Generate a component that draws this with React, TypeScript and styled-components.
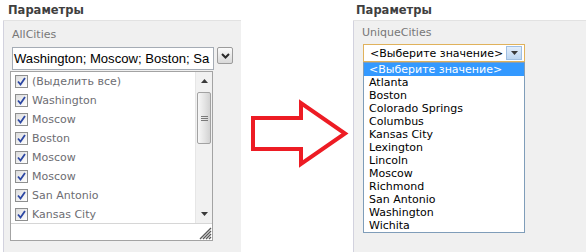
import React from 'react';
import styled, { createGlobalStyle } from 'styled-components';

const GlobalStyle = createGlobalStyle`
    html, body {
        margin: 0;
        padding: 0;
        background: #ffffff;
    }
    body {
        width: 586px;
        height: 252px;
        overflow: hidden;
        font-family: "DejaVu Sans", Verdana, sans-serif;
    }
`;

const Page = styled.div`
    display: flex;
    width: 586px;
    height: 252px;
`;

const Panel = styled.section<{ $width: number; $offset: number }>`
    width: ${p => p.$width}px;
    margin-left: ${p => p.$offset}px;
    display: flex;
    flex-direction: column;
    flex-shrink: 0;
`;

const PanelHeader = styled.div<{ $indent: number }>`
    height: 20px;
    line-height: 20px;
    padding-left: ${p => p.$indent}px;
    font-size: 11.5px;
    font-weight: bold;
    color: #3f3f3f;
    border-bottom: 1px solid #e2e2e2;
`;

const PanelBody = styled.div<{ $padTop: number; $padLeft: number }>`
    flex: 1;
    background: #f0f0f0;
    border-left: 1px solid #d2d2de;
    padding: ${p => p.$padTop}px 0 0 ${p => p.$padLeft}px;
    display: flex;
    flex-direction: column;
    align-items: flex-start;
`;

const FieldLabel = styled.div<{ $indent: number }>`
    margin-left: ${p => p.$indent}px;
    font-size: 11px;
    line-height: 14px;
    color: #777777;
`;

const InputRow = styled.div`
    display: flex;
    align-items: flex-start;
    gap: 3px;
    margin: 5px 0 0 2px;
`;

const TextBox = styled.div`
    box-sizing: border-box;
    width: 202px;
    height: 23px;
    border: 1px solid #a5acb5;
    background: #ffffff;
    padding-left: 1px;
    font-family: "Liberation Sans", Arial, sans-serif;
    font-size: 13.1px;
    line-height: 21px;
    color: #000000;
    white-space: nowrap;
    overflow: hidden;
`;

const DropButton = styled.div`
    box-sizing: border-box;
    width: 16px;
    height: 17px;
    border: 1px solid #9c9c9c;
    border-radius: 2px;
    background: linear-gradient(#fbfbfb, #d9d9d9);
    display: flex;
    align-items: center;
    justify-content: center;
`;

const CheckList = styled.div`
    box-sizing: border-box;
    width: 203px;
    height: 170px;
    margin-top: 1px;
    border: 1px solid #a3a3a3;
    background: #ffffff;
    display: flex;
    flex-direction: column;
`;

const ListViewport = styled.div`
    height: 151px;
    display: flex;
    overflow: hidden;
`;

const Items = styled.div`
    flex: 1;
    padding-left: 4px;
`;

const CheckRow = styled.div`
    height: 19px;
    display: flex;
    align-items: center;
    gap: 4px;
    font-size: 11px;
    color: #6d6d72;
    white-space: nowrap;
`;

const CheckBox = styled.span`
    box-sizing: border-box;
    width: 13px;
    height: 13px;
    border: 1px solid #8e8f8f;
    background: linear-gradient(135deg, #dcdcdc, #ffffff);
    display: flex;
    align-items: center;
    justify-content: center;
    flex-shrink: 0;
`;

const Scrollbar = styled.div`
    width: 16px;
    background: #f1f1f1;
    border-left: 1px solid #e6e6e6;
    display: flex;
    flex-direction: column;
    align-items: center;
`;

const ArrowCell = styled.div`
    height: 18px;
    width: 100%;
    display: flex;
    align-items: center;
    justify-content: center;
`;

const Thumb = styled.div`
    box-sizing: border-box;
    margin-top: 2px;
    width: 14px;
    height: 52px;
    border: 1px solid #a2a2a2;
    border-radius: 2px;
    background: linear-gradient(90deg, #f7f7f7, #e2e2e2 60%, #d2d2d2);
    display: flex;
    align-items: center;
    justify-content: center;
`;

const Spacer = styled.div`
    flex: 1;
`;

const ListFooter = styled.div`
    flex: 1;
    border-top: 1px solid #d6d6d6;
    display: flex;
    justify-content: flex-end;
    align-items: flex-end;
`;

const ArrowZone = styled.div`
    width: 112px;
    flex-shrink: 0;
`;

const SelectBox = styled.div`
    box-sizing: border-box;
    width: 162px;
    height: 18px;
    margin-top: 4px;
    border: 1px solid #e0b25c;
    background: #ffffff;
    padding-left: 6px;
    padding-right: 2px;
    display: flex;
    align-items: center;
    justify-content: space-between;
    font-size: 11px;
    color: #000000;
`;

const SelectButton = styled.div`
    box-sizing: border-box;
    width: 16px;
    height: 14px;
    border: 1px solid #9fbfe2;
    background: linear-gradient(#e3eefb, #bcd6f1);
    display: flex;
    align-items: center;
    justify-content: center;
`;

const OptionList = styled.div`
    box-sizing: border-box;
    width: 162px;
    border: 1px solid #7f9db9;
    background: #ffffff;
`;

const Option = styled.div<{ $selected?: boolean }>`
    height: 13px;
    line-height: 13px;
    padding-left: 5px;
    font-size: 11px;
    white-space: nowrap;
    color: ${p => (p.$selected ? '#ffffff' : '#000000')};
    background: ${p => (p.$selected ? '#3399ff' : 'transparent')};
`;

const checked = ['(Выделить все)', 'Washington', 'Moscow', 'Boston', 'Moscow', 'Moscow', 'San Antonio', 'Kansas City'];

const unique = [
    'Atlanta', 'Boston', 'Colorado Springs', 'Columbus', 'Kansas City', 'Lexington',
    'Lincoln', 'Moscow', 'Richmond', 'San Antonio', 'Washington', 'Wichita'
];

const Tick = () => (
    <svg width="9" height="9" viewBox="0 0 9 9">
        <path d="M1 4.5 L3.5 7.5 L8 1" fill="none" stroke="#2c47a3" strokeWidth="1.8" />
    </svg>
);

const Triangle = ({ up = false }: { up?: boolean }) => (
    <svg width="7" height="4" viewBox="0 0 7 4">
        <path d={up ? 'M0 4 L3.5 0 L7 4 Z' : 'M0 0 L7 0 L3.5 4 Z'} fill="#3a3a3a" />
    </svg>
);

const App: React.FC = () => (
    <>
        <GlobalStyle />
        <Page>
            <Panel $width={238} $offset={3}>
                <PanelHeader $indent={5}>Параметры</PanelHeader>
                <PanelBody $padTop={7} $padLeft={6}>
                    <FieldLabel $indent={2}>AllCities</FieldLabel>
                    <InputRow>
                        <TextBox>Washington; Moscow; Boston; Sa</TextBox>
                        <DropButton>
                            <svg width="9" height="6" viewBox="0 0 9 6">
                                <path d="M1 1 L4.5 4.5 L8 1" fill="none" stroke="#2a2a2a" strokeWidth="2" />
                            </svg>
                        </DropButton>
                    </InputRow>
                    <CheckList>
                        <ListViewport>
                            <Items>
                                {checked.map((name, i) => (
                                    <CheckRow key={i}>
                                        <CheckBox><Tick /></CheckBox>
                                        {name}
                                    </CheckRow>
                                ))}
                            </Items>
                            <Scrollbar>
                                <ArrowCell><Triangle up /></ArrowCell>
                                <Thumb>
                                    <svg width="7" height="5" viewBox="0 0 7 5">
                                        <path d="M0 0.5 H7 M0 2.5 H7 M0 4.5 H7" stroke="#7a7a7a" strokeWidth="1" />
                                    </svg>
                                </Thumb>
                                <Spacer />
                                <ArrowCell><Triangle /></ArrowCell>
                            </Scrollbar>
                        </ListViewport>
                        <ListFooter>
                            <svg width="14" height="14" viewBox="0 0 14 14">
                                <path d="M13 2 L2 13 M13 5 L5 13 M13 8 L8 13 M13 11 L11 13" stroke="#5a5a5a" strokeWidth="1.4" />
                            </svg>
                        </ListFooter>
                    </CheckList>
                </PanelBody>
            </Panel>
            <ArrowZone>
                <svg width="112" height="252" viewBox="241 0 112 252">
                    <polygon
                        points="253,118 301,118 301,103 345,133.5 301,164 301,149 253,149"
                        fill="none"
                        stroke="#ed1c24"
                        strokeWidth="4"
                        strokeLinejoin="miter"
                    />
                </svg>
            </ArrowZone>
            <Panel $width={233} $offset={0}>
                <PanelHeader $indent={3}>Параметры</PanelHeader>
                <PanelBody $padTop={5} $padLeft={9}>
                    <FieldLabel $indent={-1}>UniqueCities</FieldLabel>
                    <SelectBox>
                        <span>&lt;Выберите значение&gt;</span>
                        <SelectButton><Triangle /></SelectButton>
                    </SelectBox>
                    <OptionList>
                        <Option $selected>&lt;Выберите значение&gt;</Option>
                        {unique.map(name => (
                            <Option key={name}>{name}</Option>
                        ))}
                    </OptionList>
                </PanelBody>
            </Panel>
        </Page>
    </>
);

export default App;
